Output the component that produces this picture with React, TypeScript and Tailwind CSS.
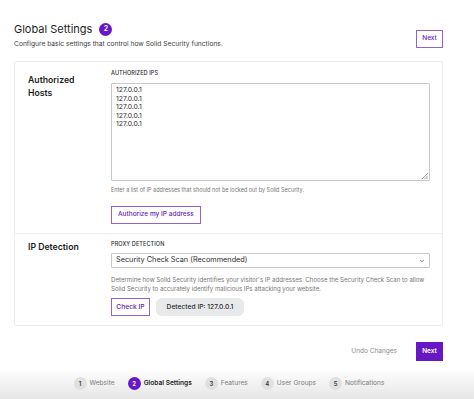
import { ChevronDown } from "lucide-react";

const ips = ["127.0.0.1", "127.0.0.1", "127.0.0.1", "127.0.0.1", "127.0.0.1"];

const steps = [
  { n: 1, label: "Website" },
  { n: 2, label: "Global Settings", active: true },
  { n: 3, label: "Features" },
  { n: 4, label: "User Groups" },
  { n: 5, label: "Notifications" },
];

export default function App() {
  return (
    <div className="w-[474px] h-[399px] bg-white overflow-hidden flex flex-col font-['Inter',sans-serif] text-[#1e1e1e] select-none">
      {/* Header */}
      <div className="flex justify-between items-start pl-[14px] pr-[31px] pt-[21px]">
        <div>
          <div className="flex items-center gap-[7px]">
            <h1 className="text-[11px] leading-[16px]">Global Settings</h1>
            <span className="w-[13px] h-[13px] rounded-full bg-[#6817c5] text-white text-[7px] font-semibold flex items-center justify-center">
              2
            </span>
          </div>
          <div className="text-[6.7px] leading-[9px] text-[#3c3c3c] mt-[3px]">
            <span className="text-[#3c3c3c] bg-transparent">Configure basic settings that control how Solid Security functions.</span>
          </div>
        </div>
        <button className="mt-[9px] w-[27px] h-[18px] border border-[#8f63d6] text-[#6817c5] text-[6.5px] font-medium">
          Next
        </button>
      </div>

      {/* Card */}
      <div className="mt-[12px] ml-[14px] w-[429px] border border-[#ededed] rounded-[2px]">
        <div className="flex pl-[13px] pr-[12px] pt-[8px] pb-[9px] border-b border-[#ededed]">
          <div className="w-[83px] pt-[4px] text-[8.7px] font-semibold leading-[12.5px]">
            Authorized
            <br />
            Hosts
          </div>
          <div className="flex-1">
            <div className="text-[5.5px] leading-[7px] font-medium uppercase tracking-[0.1px] text-[#2c2c2c] h-[13px]">
              Authorized IPs
            </div>
            <div className="relative h-[98px] border border-[#c9c9c9] rounded-[1px] px-[4px] pt-[2px]">
              {ips.map((ip, i) => (
                <div key={i} className="text-[6.8px] leading-[8.5px] text-[#2c2c2c]">
                  {ip}
                </div>
              ))}
              <svg className="absolute right-[1px] bottom-[1px]" width="6" height="6" viewBox="0 0 6 6">
                <path d="M6 0 L0 6 M6 2.5 L2.5 6 M6 4.5 L4.5 6" stroke="#888" strokeWidth="0.8" />
              </svg>
            </div>
            <p className="text-[5.5px] leading-[8px] text-[#757575] mt-[5px]">
              Enter a list of IP addresses that should not be locked out by Solid Security.
            </p>
            <button className="mt-[12px] h-[18px] px-[6px] border border-[#8f63d6] text-[#6817c5] text-[6.5px] font-medium">
              Authorize my IP address
            </button>
          </div>
        </div>

        <div className="flex pl-[13px] pr-[12px] pt-[7px] pb-[9px]">
          <div className="w-[83px] text-[8.7px] font-semibold leading-[12px]">IP Detection</div>
          <div className="flex-1">
            <div className="text-[5.5px] leading-[7px] font-medium uppercase tracking-[0.1px] text-[#2c2c2c] h-[12px]">
              Proxy Detection
            </div>
            <div className="h-[15px] border border-[#c9c9c9] rounded-[1px] flex items-center justify-between px-[4px]">
              <span className="text-[7.3px] text-[#2c2c2c]">Security Check Scan (Recommended)</span>
              <ChevronDown className="w-[6px] h-[6px] text-[#555]" strokeWidth={3} />
            </div>
            <p className="text-[6.1px] leading-[9px] text-[#757575] mt-[7px]">
              Determine how Solid Security identifies your visitor's IP addresses. Choose the Security Check Scan to allow
              Solid Security to accurately identify malicious IPs attacking your website.
            </p>
            <div className="flex gap-[6px] mt-[5px]">
              <button className="h-[18px] w-[39px] border border-[#8f63d6] text-[#6817c5] text-[6.7px] font-medium">
                Check IP
              </button>
              <div className="h-[18px] w-[88px] justify-center rounded-[6px] bg-[#e8e9eb] text-[6.7px] font-medium text-[#2c2c2c] flex items-center">
                Detected IP: 127.0.0.1
              </div>
            </div>
          </div>
        </div>
      </div>

      {/* Footer actions */}
      <div className="flex justify-end items-center pr-[31px] mt-[16px] gap-[19px]">
        <span className="text-[6.5px] text-[#8a8a8a]">Undo Changes</span>
        <button className="w-[27px] h-[19px] bg-[#6817c5] text-white text-[6.5px] font-semibold">Next</button>
      </div>

      {/* Step bar */}
      <div className="mt-auto h-[31px] bg-gradient-to-b from-white to-[#e6e6e6] flex items-center justify-center gap-[13px] pr-[16px]">
        {steps.map((s) => (
          <div key={s.n} className="flex items-center gap-[3px]">
            <span
              className={
                s.active
                  ? "w-[13px] h-[13px] rounded-full bg-[#6817c5] text-white text-[6px] font-semibold flex items-center justify-center"
                  : "w-[13px] h-[13px] rounded-full bg-[#e0e0e0] text-[#3a3a3a] text-[6px] font-semibold flex items-center justify-center"
              }
            >
              {s.n}
            </span>
            <span className={s.active ? "text-[6.6px] font-semibold text-[#1e1e1e]" : "text-[6.6px] text-[#7a7a7a]"}>
              {s.label}
            </span>
          </div>
        ))}
      </div>
    </div>
  );
}
